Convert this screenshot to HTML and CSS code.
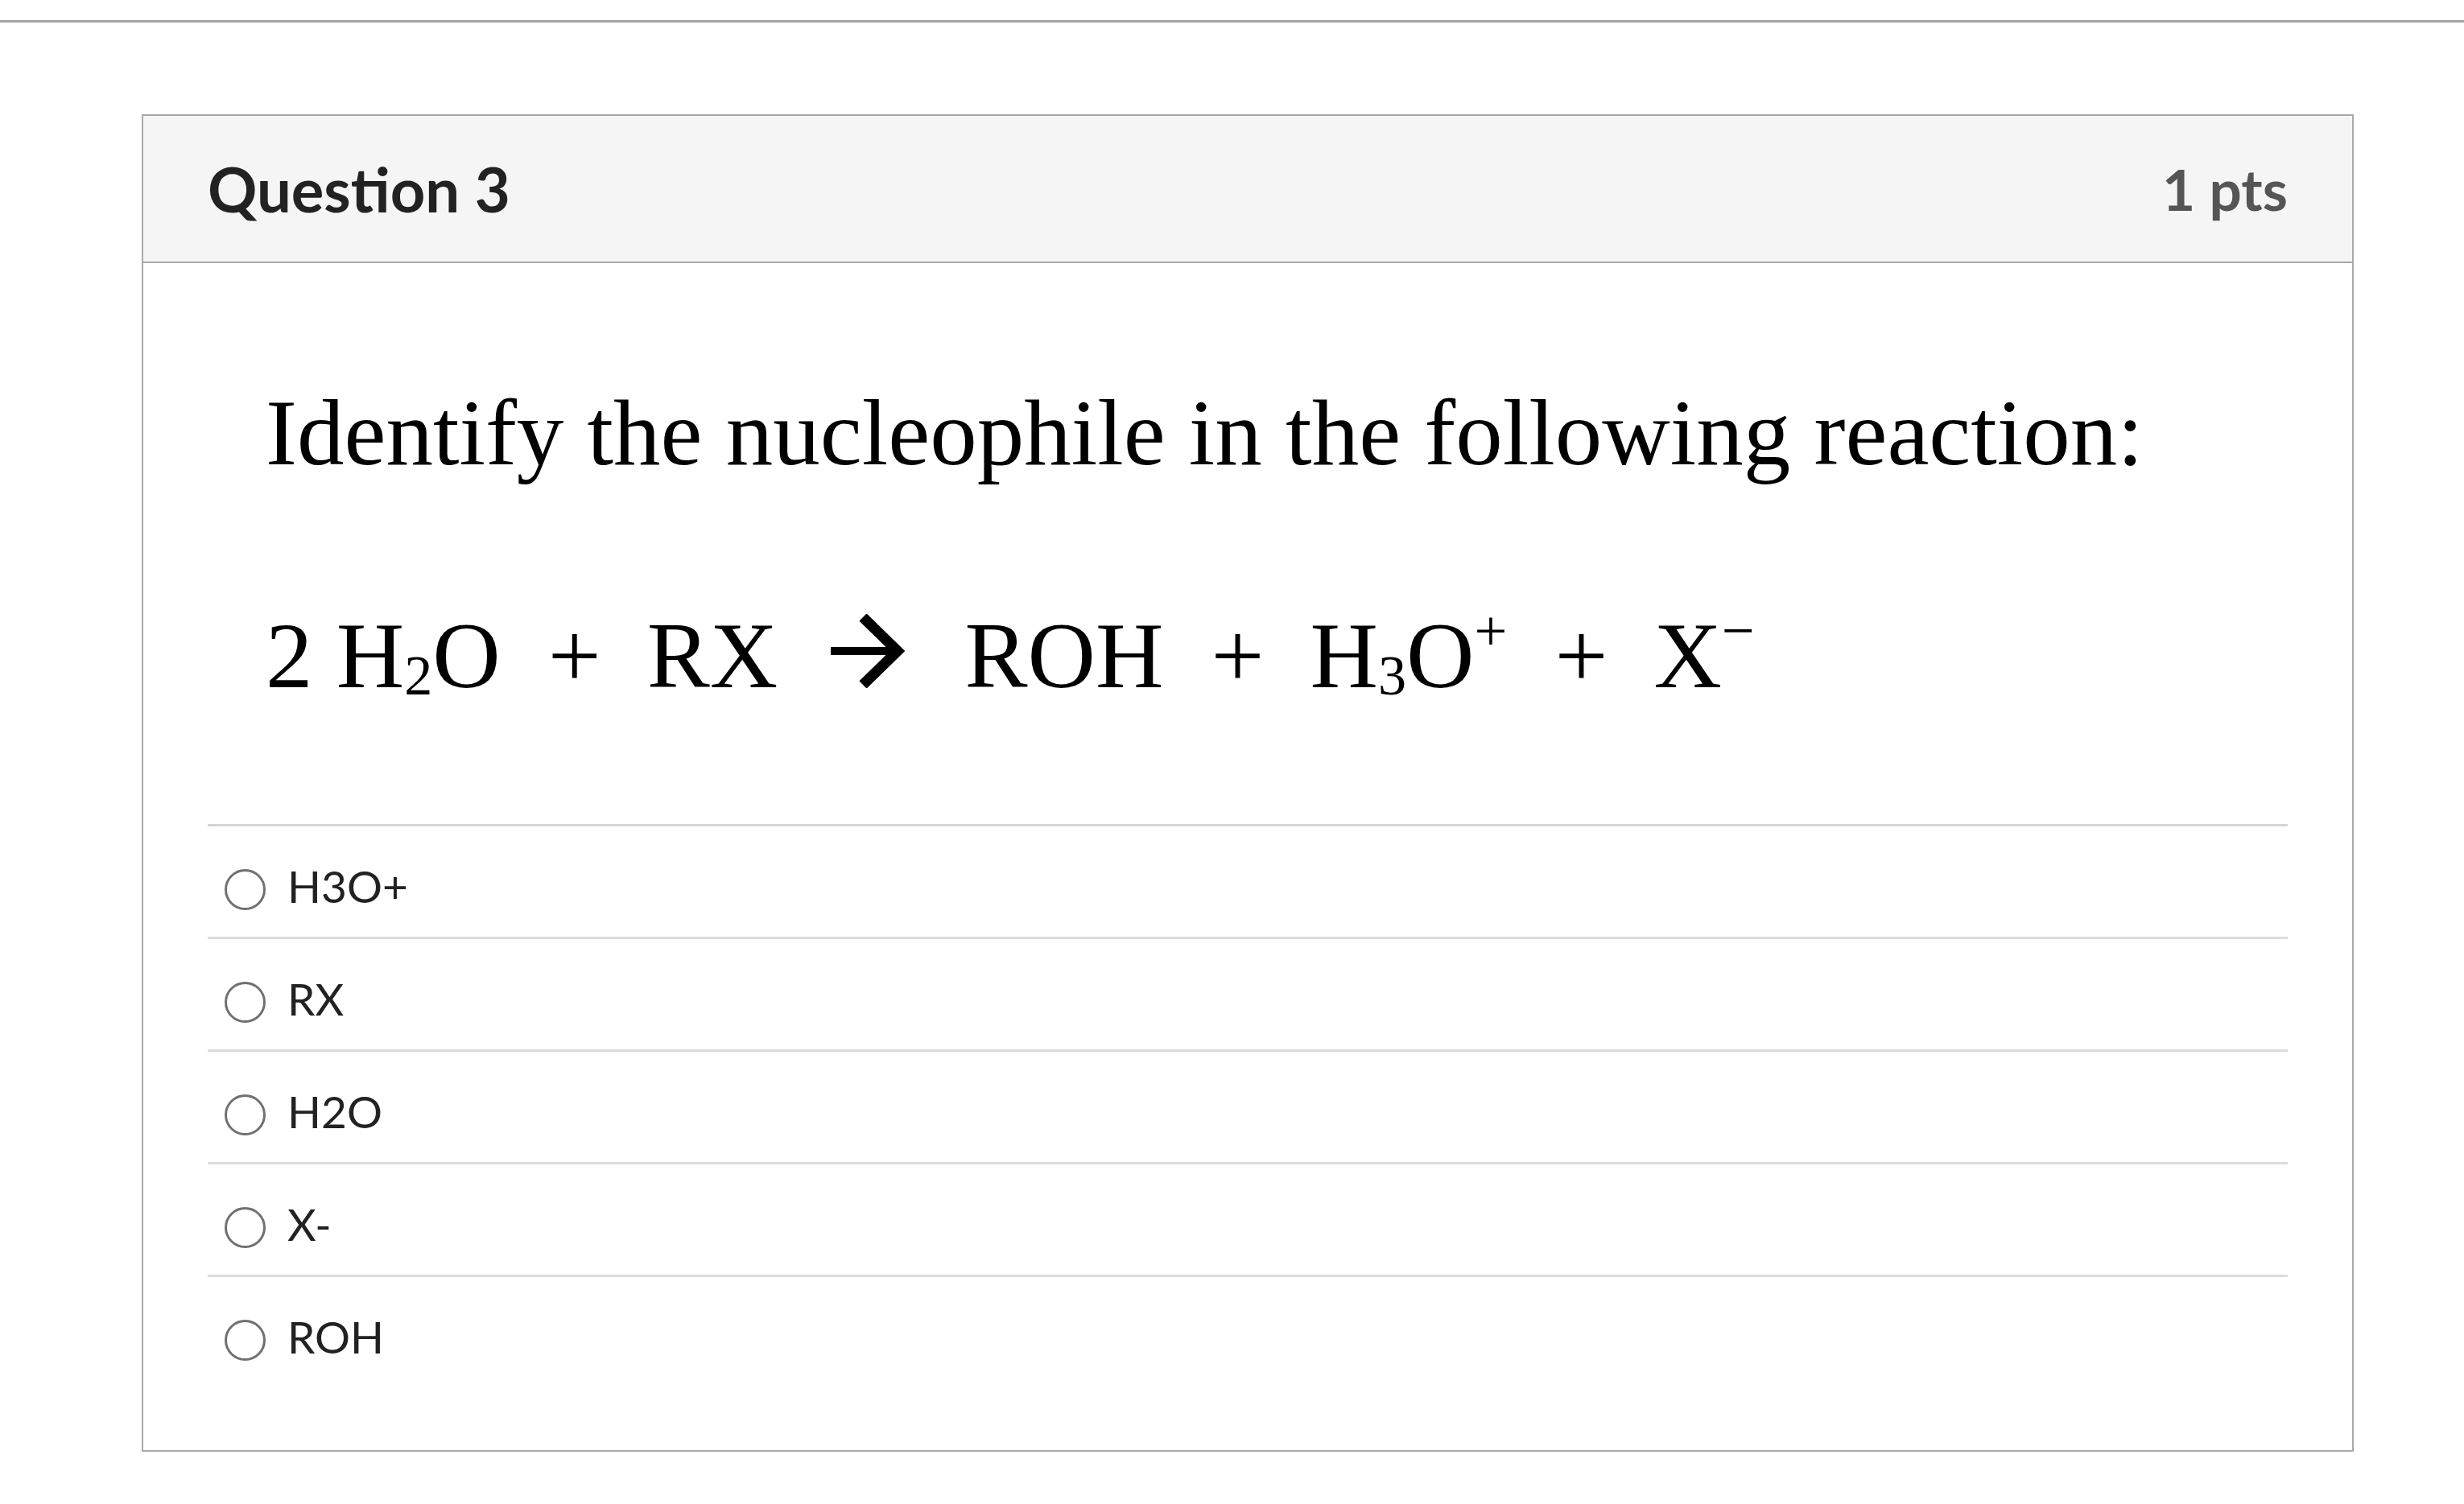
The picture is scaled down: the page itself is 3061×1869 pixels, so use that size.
FILE: index.html
```html
<!DOCTYPE html>
<html lang="en">
<head>
<meta charset="utf-8">
<title>Question 3</title>
<link rel="stylesheet" href="styles.css">
</head>
<body>
<div class="topbar"></div>
<div class="question-card">
  <div class="q-header">
    <span class="q-name">Question 3</span>
    <span class="q-points">1 pts</span>
  </div>
  <div class="q-body">
    <p class="q-text">Identify the nucleophile in the following reaction:</p>
    <p class="q-eq"><span>2 H<sub>2</sub>O</span><span class="op">+</span><span>RX</span><svg class="arrow" width="94" height="92" viewBox="0 0 94 92"><line x1="0" y1="46" x2="84" y2="46" stroke="#000" stroke-width="10"/><polyline points="40,4 83,46 40,88" fill="none" stroke="#000" stroke-width="13" stroke-linejoin="miter"/></svg><span>ROH</span><span class="op">+</span><span>H<sub>3</sub>O<sup>+</sup></span><span class="op">+</span><span>X<sup>−</sup></span></p>
    <ul class="answers">
      <li class="answer"><span class="radio"></span><span class="label">H3O+</span></li>
      <li class="answer"><span class="radio"></span><span class="label">RX</span></li>
      <li class="answer"><span class="radio"></span><span class="label">H2O</span></li>
      <li class="answer"><span class="radio"></span><span class="label">X-</span></li>
      <li class="answer"><span class="radio"></span><span class="label">ROH</span></li>
    </ul>
  </div>
</div>
</body>
</html>
```
FILE: styles.css
```css
html, body {
  margin: 0;
  padding: 0;
  background: #ffffff;
}

body {
  font-family: Lato, "Liberation Sans", sans-serif;
  color: #222222;
}

.topbar {
  height: 3px;
  margin-top: 25px;
  background: #a4a4a4;
}

.question-card {
  width: 2744px;
  margin: 114px 0 0 176px;
  border: 2px solid #a9a9a9;
  background: #ffffff;
}

.q-header {
  height: 181px;
  display: flex;
  align-items: center;
  justify-content: space-between;
  padding: 0 80px;
  background: #f5f5f5;
  border-bottom: 2px solid #a9a9a9;
}

.q-name {
  font-weight: 700;
  font-size: 76px;
  color: #222222;
}

.q-points {
  font-weight: 700;
  font-size: 71px;
  color: #555555;
}

.q-body {
  padding: 141px 80px 78px 80px;
}

.q-text,
.q-eq {
  margin: 0;
  padding-left: 72px;
  font-family: "Liberation Serif", "Times New Roman", serif;
  font-size: 117px;
  line-height: 140px;
  color: #000000;
  white-space: nowrap;
}

.q-eq {
  margin-top: 137px;
}

.q-eq sub {
  font-size: 0.6em;
  line-height: 0;
  vertical-align: -9px;
}

.q-eq sup {
  font-size: 0.62em;
  line-height: 0;
  vertical-align: 46px;
}

.q-eq .op {
  margin: 0 57px 0 59px;
}

.q-eq .arrow {
  margin: 0 72px 0 66px;
  vertical-align: -1px;
}

.answers {
  list-style: none;
  margin: 139px 0 0 0;
  padding: 0;
}

.answer {
  display: flex;
  align-items: center;
  height: 127px;
  padding-top: 10px;
  border-top: 3px solid #dcdcdc;
}

.answer:first-child {
  border-top-color: #d6d6d6;
}

.radio {
  box-sizing: border-box;
  width: 51px;
  height: 51px;
  margin: 10px 0 0 21px;
  border: 3px solid #707070;
  border-radius: 50%;
  background: #ffffff;
  flex: none;
}

.label {
  margin-left: 27px;
  font-size: 55px;
  color: #222222;
}
```
